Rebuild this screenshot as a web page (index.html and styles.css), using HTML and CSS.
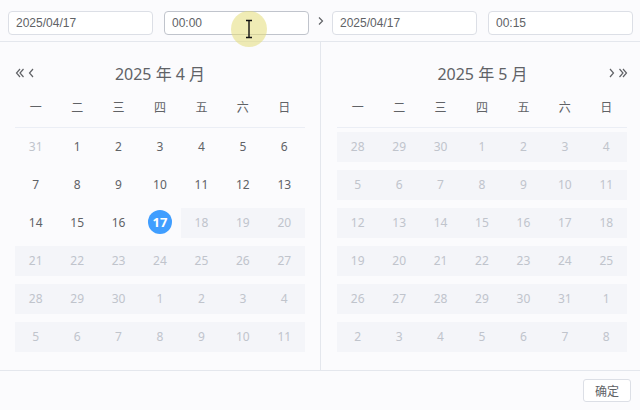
FILE: index.html
```html
<!DOCTYPE html>
<html lang="zh-CN">
<head>
    <meta charset="UTF-8">
    <meta name="viewport" content="width=device-width, initial-scale=1.0">
    <title>日期时间范围</title>
    <link rel="stylesheet" href="styles.css">
</head>
<body>
    <div class="range-head">
        <div class="range-side">
            <input class="range-input" type="text" value="2025/04/17">
            <input class="range-input is-focus" type="text" value="00:00">
        </div>
        <div class="range-sep">
            <svg width="8" height="10" viewBox="0 0 8 10"><path d="M2 1.5 L5.5 5 L2 8.5" fill="none" stroke="#606266" stroke-width="1.2"/></svg>
        </div>
        <div class="range-side">
            <input class="range-input" type="text" value="2025/04/17">
            <input class="range-input" type="text" value="00:15">
        </div>
    </div>

    <div class="range-body">
        <div class="panel panel-left">
            <div class="panel-title">
                <div class="panel-nav">
                    <svg width="22" height="12" viewBox="0 0 22 12"><path d="M5 2 L1.5 6 L5 10 M8.5 2 L5 6 L8.5 10" fill="none" stroke="#606266" stroke-width="1.2"/><path d="M18 2 L14.5 6 L18 10" fill="none" stroke="#606266" stroke-width="1.2"/></svg>
                </div>
                <div class="panel-label">2025 年 4 月</div>
                <div></div>
            </div>
            <table class="date-table">
                <tr><th>一</th><th>二</th><th>三</th><th>四</th><th>五</th><th>六</th><th>日</th></tr>
                <tr>
                    <td class="prev"><div>31</div></td><td><div>1</div></td><td><div>2</div></td><td><div>3</div></td><td><div>4</div></td><td><div>5</div></td><td><div>6</div></td>
                </tr>
                <tr>
                    <td><div>7</div></td><td><div>8</div></td><td><div>9</div></td><td><div>10</div></td><td><div>11</div></td><td><div>12</div></td><td><div>13</div></td>
                </tr>
                <tr>
                    <td><div>14</div></td><td><div>15</div></td><td><div>16</div></td><td class="current"><div><span>17</span></div></td><td class="disabled"><div>18</div></td><td class="disabled"><div>19</div></td><td class="disabled"><div>20</div></td>
                </tr>
                <tr class="disabled-row">
                    <td><div>21</div></td><td><div>22</div></td><td><div>23</div></td><td><div>24</div></td><td><div>25</div></td><td><div>26</div></td><td><div>27</div></td>
                </tr>
                <tr class="disabled-row">
                    <td><div>28</div></td><td><div>29</div></td><td><div>30</div></td><td><div>1</div></td><td><div>2</div></td><td><div>3</div></td><td><div>4</div></td>
                </tr>
                <tr class="disabled-row">
                    <td><div>5</div></td><td><div>6</div></td><td><div>7</div></td><td><div>8</div></td><td><div>9</div></td><td><div>10</div></td><td><div>11</div></td>
                </tr>
            </table>
        </div>

        <div class="panel panel-right">
            <div class="panel-title">
                <div></div>
                <div class="panel-label">2025 年 5 月</div>
                <div class="panel-nav nav-right">
                    <svg width="22" height="12" viewBox="0 0 22 12"><path d="M4 2 L7.5 6 L4 10" fill="none" stroke="#606266" stroke-width="1.2"/><path d="M13.5 2 L17 6 L13.5 10 M17 2 L20.5 6 L17 10" fill="none" stroke="#606266" stroke-width="1.2"/></svg>
                </div>
            </div>
            <table class="date-table">
                <tr><th>一</th><th>二</th><th>三</th><th>四</th><th>五</th><th>六</th><th>日</th></tr>
                <tr class="disabled-row">
                    <td><div>28</div></td><td><div>29</div></td><td><div>30</div></td><td><div>1</div></td><td><div>2</div></td><td><div>3</div></td><td><div>4</div></td>
                </tr>
                <tr class="disabled-row">
                    <td><div>5</div></td><td><div>6</div></td><td><div>7</div></td><td><div>8</div></td><td><div>9</div></td><td><div>10</div></td><td><div>11</div></td>
                </tr>
                <tr class="disabled-row">
                    <td><div>12</div></td><td><div>13</div></td><td><div>14</div></td><td><div>15</div></td><td><div>16</div></td><td><div>17</div></td><td><div>18</div></td>
                </tr>
                <tr class="disabled-row">
                    <td><div>19</div></td><td><div>20</div></td><td><div>21</div></td><td><div>22</div></td><td><div>23</div></td><td><div>24</div></td><td><div>25</div></td>
                </tr>
                <tr class="disabled-row">
                    <td><div>26</div></td><td><div>27</div></td><td><div>28</div></td><td><div>29</div></td><td><div>30</div></td><td><div>31</div></td><td><div>1</div></td>
                </tr>
                <tr class="disabled-row">
                    <td><div>2</div></td><td><div>3</div></td><td><div>4</div></td><td><div>5</div></td><td><div>6</div></td><td><div>7</div></td><td><div>8</div></td>
                </tr>
            </table>
        </div>
    </div>

    <div class="range-foot">
        <button class="confirm-btn" type="button">确定</button>
    </div>

    <!-- pointer highlight over the time input -->
    <div class="cursor-spot">
        <svg width="10" height="20" viewBox="0 0 10 20"><path d="M2 1.5 H8 M5 1.5 V18.5 M2 18.5 H8" fill="none" stroke="#111" stroke-width="1.4"/></svg>
    </div>
</body>
</html>
```

FILE: styles.css
```css
body {
    margin: 0;
    width: 640px;
    height: 410px;
    position: relative;
    overflow: hidden;
    background-color: #fbfbfd;
    color: #606266;
    font-family: "Noto Sans", "Noto Sans CJK SC", sans-serif;
}
.range-head {
    display: flex;
    align-items: center;
    height: 24px;
    padding: 11px 7px 6px 8px;
    border-bottom: 1px solid #e4e7ed;
}
.range-side {
    display: flex;
    gap: 11px;
}
.range-input {
    width: 145px;
    height: 24px;
    box-sizing: border-box;
    margin: 0;
    padding: 0 7px;
    border: 1px solid #dcdfe6;
    border-radius: 4px;
    background-color: #fff;
    color: #606266;
    font-family: "Liberation Sans", Arial, sans-serif;
    font-size: 12px;
    outline: none;
}
.range-input.is-focus {
    border-color: #c0c4cc;
}
.range-sep {
    width: 23px;
    display: flex;
    justify-content: center;
    align-items: center;
    padding-bottom: 4px;
}
.range-body {
    display: flex;
    height: 328px;
}
.panel {
    width: 320px;
    box-sizing: border-box;
    padding: 17px 15px 0;
}
.panel-right {
    border-left: 1px solid #e4e7ed;
    padding: 17px 12px 0 16px;
}
.panel-title {
    display: grid;
    grid-template-columns: 1fr auto 1fr;
    align-items: center;
    height: 28px;
}
.panel-label {
    font-size: 16px;
}
.panel-nav {
    display: flex;
    align-items: center;
}
.panel-nav.nav-right {
    justify-content: flex-end;
}
.date-table {
    width: 290px;
    border-collapse: collapse;
    table-layout: fixed;
    font-size: 12px;
}
.date-table th {
    height: 40px;
    padding: 0;
    font-weight: normal;
    border-bottom: 1px solid #ebeef5;
}
.date-table td {
    height: 38px;
    padding: 4px 0;
    box-sizing: border-box;
    text-align: center;
}
.date-table td div {
    height: 30px;
    line-height: 30px;
}
.date-table td.prev {
    color: #c0c4cc;
}
.date-table td.disabled,
.date-table .disabled-row td {
    color: #c0c4cc;
}
.date-table td.disabled div,
.date-table .disabled-row td div {
    background-color: #f4f5f9;
}
.date-table td.current span {
    display: inline-block;
    width: 24px;
    height: 24px;
    line-height: 24px;
    border-radius: 50%;
    background-color: #409eff;
    color: #fff;
    font-weight: bold;
    font-size: 13px;
}
.range-foot {
    display: flex;
    justify-content: flex-end;
    align-items: center;
    height: 39px;
    padding-right: 9px;
    border-top: 1px solid #e4e7ed;
}
.confirm-btn {
    height: 23px;
    padding: 0 11px;
    border: 1px solid #dcdfe6;
    border-radius: 3px;
    background-color: #fff;
    color: #606266;
    font-family: "Noto Sans CJK SC", sans-serif;
    font-size: 12px;
}
.cursor-spot {
    position: absolute;
    left: 231px;
    top: 11px;
    width: 36px;
    height: 36px;
    border-radius: 50%;
    background-color: rgba(228, 220, 120, 0.55);
    display: flex;
    justify-content: center;
    align-items: center;
}
```
